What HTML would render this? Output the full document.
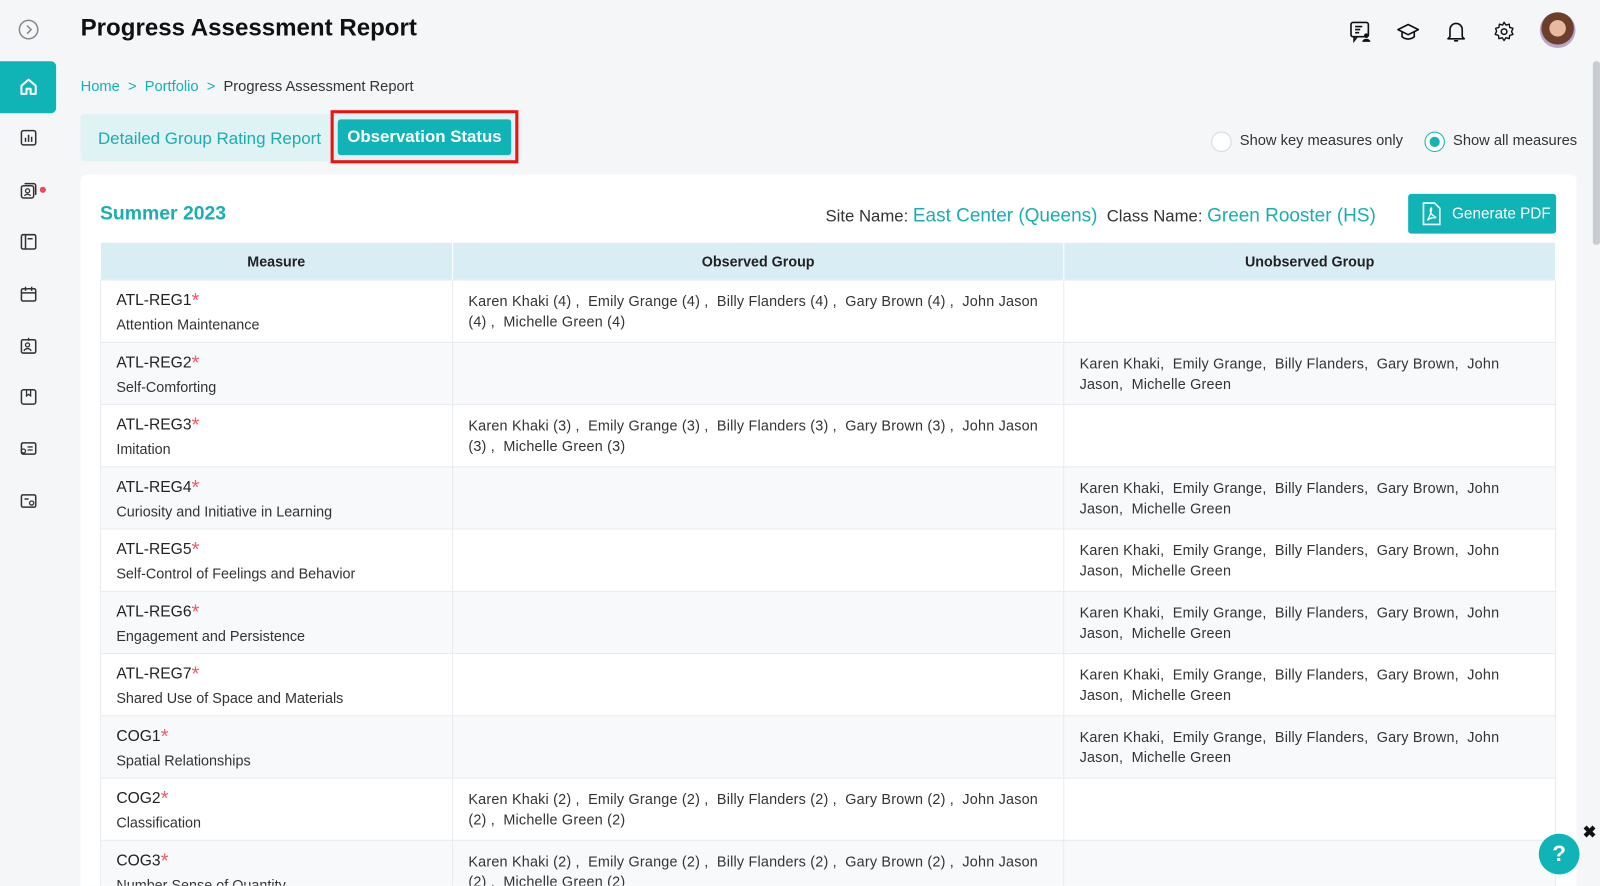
<!DOCTYPE html>
<html><head><meta charset="utf-8"><style>
*{box-sizing:border-box;margin:0;padding:0}
body{width:1600px;height:885px;overflow:hidden;background:#f4f6f8;font-family:"Liberation Sans",sans-serif;color:#222;position:relative}
#w{position:absolute;left:0;top:0;width:1568px;height:868px;transform:scale(1.0204);transform-origin:0 0;overflow:hidden}
.side{position:absolute;left:0;top:0;width:56px;height:885px}
.side .it{position:absolute;left:18px;width:20px;height:20px}
.home{position:absolute;left:0;top:60px;width:55px;height:51px;background:#10b3b6;border-radius:0 5px 5px 0}
h1{position:absolute;left:79px;top:15px;font-size:23.6px;font-weight:bold;color:#111}
.bc{position:absolute;left:79px;top:77px;font-size:14.4px;color:#333}
.bc span.l{color:#10b3b6}
.bc .s{color:#10b3b6;margin:0 8px}
.tabs{position:absolute;left:79px;top:112px;width:432px;height:46px;background:#dff2f4;border-radius:4px}
.tab1{position:absolute;left:96px;top:126px;font-size:16.6px;color:#19aeb1}
.redb{position:absolute;left:324px;top:108px;width:184px;height:52px;border:3px solid #f20f0f}
.tab2{position:absolute;left:331px;top:117px;width:170px;height:35px;background:#10b3b6;border-radius:3px;color:#fff;font-weight:bold;font-size:16.5px;text-align:center;line-height:35px}
.radio{position:absolute;top:129px;width:20px;height:20px;border-radius:50%;border:1px solid #d4d9dc;background:#fff}
.rl{position:absolute;top:130px;font-size:14.4px;color:#333}
.card{position:absolute;left:79px;top:171px;width:1466px;height:720px;background:#fff;border-radius:6px}
.sum{position:absolute;left:98px;top:199px;font-size:19px;font-weight:bold;color:#19aeb1}
.site{position:absolute;top:200px;font-size:16.4px;color:#333}
.site b{color:#19aeb1;font-weight:normal;font-size:18.6px}
.pdf{position:absolute;left:1380px;top:190px;width:145px;height:39px;background:#10b3b6;border-radius:3px;color:#fff;font-size:15px}
table{position:absolute;left:98px;top:238px;width:1427px;border-collapse:collapse;table-layout:fixed}
th{background:#d9edf5;height:36px;font-size:14px;font-weight:bold;color:#222;border-right:1px solid #fff}
td{height:61px;border:1px solid #e8ebee;vertical-align:top;font-size:14.1px;letter-spacing:.2px;color:#333;line-height:20px;padding:10px 15px 0}
tr:nth-child(odd) td{background:#f8f9fb}
tr:nth-child(even) td{background:#fff}
td.m{padding-top:10px;letter-spacing:0}
td.m .c{font-size:15.3px;color:#222;line-height:20px}
td.m .c i{color:#f25a6a;font-style:normal;font-size:20px;vertical-align:-2px}
td.m .n{font-size:14.1px;color:#333;margin-top:3px}
.help{position:absolute;left:1508px;top:817px;width:40px;height:40px;border-radius:50%;background:#10b3b6;color:#fff;font-weight:bold;font-size:22px;text-align:center;line-height:40px}
.sb{position:absolute;left:1561px;top:60px;width:7px;height:180px;background:#c8ccd2;border-radius:3px}
</style></head><body><div id="w">
<div class="side">
<svg class="it" style="top:19px" viewBox="0 0 20 20"><circle cx="10" cy="10" r="9" fill="none" stroke="#888" stroke-width="1.5"/><path d="M8.5 6l4 4-4 4" fill="none" stroke="#888" stroke-width="1.5"/></svg>
<div class="home"></div>
<svg class="it" style="top:75px" viewBox="0 0 20 20"><path d="M3 9L10 3l7 6v8H12v-5H8v5H3z" fill="none" stroke="#fff" stroke-width="2" stroke-linejoin="round"/></svg>
<svg class="it" style="top:125px" viewBox="0 0 20 20"><rect x="3" y="3" width="14" height="14" rx="2" fill="none" stroke="#333" stroke-width="1.5"/><path d="M7 14V10M10 14V7M13 14V9" stroke="#333" stroke-width="1.5"/></svg>
<svg class="it" style="top:177px" viewBox="0 0 20 20"><rect x="3" y="5" width="12" height="12" rx="2" fill="none" stroke="#333" stroke-width="1.5"/><path d="M6 3h9a2 2 0 012 2v9" fill="none" stroke="#333" stroke-width="1.5"/><circle cx="9" cy="10" r="2" fill="none" stroke="#333" stroke-width="1.3"/><path d="M6 15c1-2 5-2 6 0" fill="none" stroke="#333" stroke-width="1.3"/></svg>
<div style="position:absolute;left:39px;top:183px;width:6px;height:6px;border-radius:50%;background:#f2475a"></div>
<svg class="it" style="top:227px" viewBox="0 0 20 20"><rect x="3" y="3" width="14" height="14" rx="1.5" fill="none" stroke="#333" stroke-width="1.5"/><path d="M7 3v14M9 7h5" stroke="#333" stroke-width="1.5"/></svg>
<svg class="it" style="top:278px" viewBox="0 0 20 20"><rect x="3" y="5" width="14" height="12" rx="1.5" fill="none" stroke="#333" stroke-width="1.5"/><path d="M3 9h14M7 3v4M13 3v4" stroke="#333" stroke-width="1.5"/></svg>
<svg class="it" style="top:329px" viewBox="0 0 20 20"><rect x="3" y="4" width="14" height="13" rx="1.5" fill="none" stroke="#333" stroke-width="1.5"/><circle cx="9" cy="9" r="2" fill="none" stroke="#333" stroke-width="1.3"/><path d="M5.5 15c1-3 6-3 7 0M10 2v3" fill="none" stroke="#333" stroke-width="1.3"/></svg>
<svg class="it" style="top:379px" viewBox="0 0 20 20"><rect x="3" y="3" width="14" height="14" rx="2" fill="none" stroke="#333" stroke-width="1.5"/><path d="M8 3v6l2-1.5 2 1.5V3" fill="none" stroke="#333" stroke-width="1.3"/></svg>
<svg class="it" style="top:430px" viewBox="0 0 20 20"><rect x="3" y="4" width="14" height="11" rx="1.5" fill="none" stroke="#333" stroke-width="1.5"/><path d="M9 8h5M9 11h5" stroke="#333" stroke-width="1.3"/><circle cx="5" cy="12" r="2" fill="#fff" stroke="#333" stroke-width="1.3"/></svg>
<svg class="it" style="top:481px" viewBox="0 0 20 20"><rect x="3" y="4" width="14" height="12" rx="1.5" fill="none" stroke="#333" stroke-width="1.5"/><path d="M6 8h4" stroke="#333" stroke-width="1.5"/><circle cx="13" cy="12" r="2" fill="#fff" stroke="#333" stroke-width="1.3"/></svg>
</div>
<h1>Progress Assessment Report</h1>
<svg style="position:absolute;left:1322px;top:20px" width="22" height="22" viewBox="0 0 22 22"><rect x="2" y="2" width="17" height="14" rx="2" fill="none" stroke="#111" stroke-width="1.6"/><path d="M5 16v4l3-4M6 6h7M6 9h5M6 12h4" stroke="#111" stroke-width="1.6" fill="none"/><circle cx="17" cy="15" r="2.3" fill="#111"/><path d="M13 21a4 3 0 018 0z" fill="#111"/></svg>
<svg style="position:absolute;left:1368px;top:20px" width="24" height="22" viewBox="0 0 24 22"><path d="M12 4L2 9l10 5 10-5z" fill="none" stroke="#111" stroke-width="1.6" stroke-linejoin="round"/><path d="M6 11v5c3 3 9 3 12 0v-5" fill="none" stroke="#111" stroke-width="1.6"/></svg>
<svg style="position:absolute;left:1416px;top:19px" width="22" height="24" viewBox="0 0 22 24"><path d="M5 17V10a6 6 0 0112 0v7l2 2H3z" fill="none" stroke="#111" stroke-width="1.6" stroke-linejoin="round"/><path d="M9 21h4" stroke="#111" stroke-width="1.6"/></svg>
<svg style="position:absolute;left:1463px;top:20px" width="22" height="22" viewBox="0 0 24 24"><circle cx="12" cy="12" r="3" fill="none" stroke="#111" stroke-width="1.6"/><path d="M12 2l2 3 3.5-1 .5 3.5 3.5 1-1.5 3.5 1.5 3-3.5 1-.5 3.5-3.5-1-2 3-2-3-3.5 1-.5-3.5-3.5-1 1.5-3.5L3 8.5l3.5-1L7 4l3.5 1z" fill="none" stroke="#111" stroke-width="1.5" stroke-linejoin="round"/></svg>
<div style="position:absolute;left:1509px;top:12px;width:35px;height:35px;border-radius:50%;background:radial-gradient(circle at 50% 45%,#e8b9a0 0 30%,#6b3f2c 32% 60%,#b9a6c9 62%)"></div>
<div class="sb"></div>
<div class="bc"><span class="l">Home</span><span class="s">&gt;</span><span class="l">Portfolio</span><span class="s">&gt;</span>Progress Assessment Report</div>
<div class="tabs"></div>
<div class="tab1">Detailed Group Rating Report</div>
<div class="redb"></div>
<div class="tab2">Observation Status</div>
<div class="radio" style="left:1187px"></div><div class="rl" style="left:1215px">Show key measures only</div>
<div class="radio" style="left:1396px;border-color:#10b3b6"><div style="position:absolute;left:4px;top:4px;width:10px;height:10px;border-radius:50%;background:#10b3b6"></div></div><div class="rl" style="left:1424px">Show all measures</div>
<div class="card"></div>
<div class="sum">Summer 2023</div>
<div class="site" style="left:809px">Site Name: <b>East Center (Queens)</b>&nbsp; Class Name: <b>Green Rooster (HS)</b></div>
<div class="pdf"><svg style="position:absolute;left:13px;top:8px" width="20" height="23" viewBox="0 0 20 23"><path d="M2 1h11l5 5v16H2z" fill="none" stroke="#fff" stroke-width="1.6"/><path d="M6 18c2-4 4-8 4-11s-2 0-1 3 4 4 5 5-5-1-8 3" fill="none" stroke="#fff" stroke-width="1.3"/></svg><span style="position:absolute;left:43px;top:11px">Generate PDF</span></div>
<table>
<colgroup><col style="width:345px"><col style="width:599px"><col></colgroup>
<tr><th>Measure</th><th>Observed Group</th><th>Unobserved Group</th></tr>
<tr><td class="m"><div class="c">ATL-REG1<i>*</i></div><div class="n">Attention Maintenance</div></td><td>Karen Khaki (4) ,&nbsp; Emily Grange (4) ,&nbsp; Billy Flanders (4) ,&nbsp; Gary Brown (4) ,&nbsp; John Jason (4) ,&nbsp; Michelle Green (4)</td><td></td></tr>
<tr><td class="m"><div class="c">ATL-REG2<i>*</i></div><div class="n">Self-Comforting</div></td><td></td><td>Karen Khaki,&nbsp; Emily Grange,&nbsp; Billy Flanders,&nbsp; Gary Brown,&nbsp; John Jason,&nbsp; Michelle Green</td></tr>
<tr><td class="m"><div class="c">ATL-REG3<i>*</i></div><div class="n">Imitation</div></td><td>Karen Khaki (3) ,&nbsp; Emily Grange (3) ,&nbsp; Billy Flanders (3) ,&nbsp; Gary Brown (3) ,&nbsp; John Jason (3) ,&nbsp; Michelle Green (3)</td><td></td></tr>
<tr><td class="m"><div class="c">ATL-REG4<i>*</i></div><div class="n">Curiosity and Initiative in Learning</div></td><td></td><td>Karen Khaki,&nbsp; Emily Grange,&nbsp; Billy Flanders,&nbsp; Gary Brown,&nbsp; John Jason,&nbsp; Michelle Green</td></tr>
<tr><td class="m"><div class="c">ATL-REG5<i>*</i></div><div class="n">Self-Control of Feelings and Behavior</div></td><td></td><td>Karen Khaki,&nbsp; Emily Grange,&nbsp; Billy Flanders,&nbsp; Gary Brown,&nbsp; John Jason,&nbsp; Michelle Green</td></tr>
<tr><td class="m"><div class="c">ATL-REG6<i>*</i></div><div class="n">Engagement and Persistence</div></td><td></td><td>Karen Khaki,&nbsp; Emily Grange,&nbsp; Billy Flanders,&nbsp; Gary Brown,&nbsp; John Jason,&nbsp; Michelle Green</td></tr>
<tr><td class="m"><div class="c">ATL-REG7<i>*</i></div><div class="n">Shared Use of Space and Materials</div></td><td></td><td>Karen Khaki,&nbsp; Emily Grange,&nbsp; Billy Flanders,&nbsp; Gary Brown,&nbsp; John Jason,&nbsp; Michelle Green</td></tr>
<tr><td class="m"><div class="c">COG1<i>*</i></div><div class="n">Spatial Relationships</div></td><td></td><td>Karen Khaki,&nbsp; Emily Grange,&nbsp; Billy Flanders,&nbsp; Gary Brown,&nbsp; John Jason,&nbsp; Michelle Green</td></tr>
<tr><td class="m"><div class="c">COG2<i>*</i></div><div class="n">Classification</div></td><td>Karen Khaki (2) ,&nbsp; Emily Grange (2) ,&nbsp; Billy Flanders (2) ,&nbsp; Gary Brown (2) ,&nbsp; John Jason (2) ,&nbsp; Michelle Green (2)</td><td></td></tr>
<tr><td class="m"><div class="c">COG3<i>*</i></div><div class="n">Number Sense of Quantity</div></td><td>Karen Khaki (2) ,&nbsp; Emily Grange (2) ,&nbsp; Billy Flanders (2) ,&nbsp; Gary Brown (2) ,&nbsp; John Jason (2) ,&nbsp; Michelle Green (2)</td><td></td></tr>
</table>
<div style="position:absolute;left:1551px;top:806px;font-size:16px;font-weight:bold;color:#111">✖</div>
<div class="help">?</div>
</div></body></html>
